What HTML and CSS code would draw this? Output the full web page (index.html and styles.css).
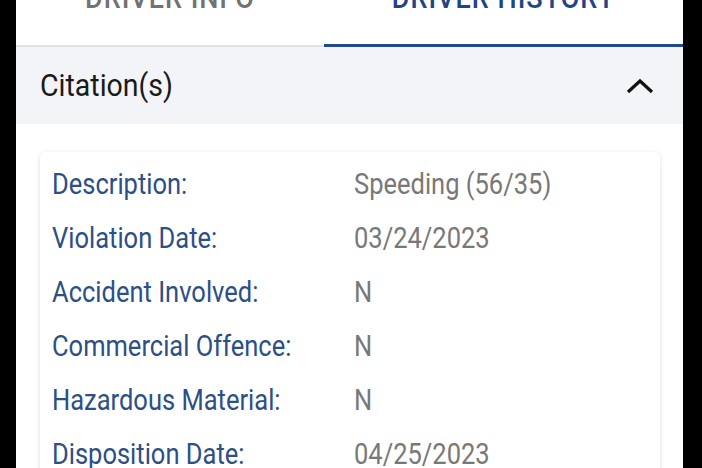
FILE: index.html
```html
<!DOCTYPE html>
<html>
<head>
<meta charset="utf-8">
<link rel="stylesheet" href="styles.css">
</head>
<body>
<div class="screen">
  <div class="tabs">
    <div class="tab tab-info"><span class="tab-text">DRIVER INFO</span></div>
    <div class="tab tab-history active"><span class="tab-text">DRIVER HISTORY</span></div>
  </div>
  <div class="section-header">
    <span class="section-title">Citation(s)</span>
    <svg class="chevron" width="30" height="18" viewBox="0 0 30 18">
      <path d="M3 15 L15 4 L27 15" fill="none" stroke="#111" stroke-width="3.2"/>
    </svg>
  </div>
  <div class="content">
    <div class="card">
      <div class="row"><span class="label">Description:</span><span class="value">Speeding (56/35)</span></div>
      <div class="row"><span class="label">Violation Date:</span><span class="value">03/24/2023</span></div>
      <div class="row"><span class="label">Accident Involved:</span><span class="value">N</span></div>
      <div class="row"><span class="label">Commercial Offence:</span><span class="value">N</span></div>
      <div class="row"><span class="label">Hazardous Material:</span><span class="value">N</span></div>
      <div class="row"><span class="label">Disposition Date:</span><span class="value">04/25/2023</span></div>
    </div>
  </div>
</div>
</body>
</html>
```

FILE: styles.css
```css
html, body {
  margin: 0;
  padding: 0;
  background: #000;
  height: 100%;
  overflow: hidden;
}
.screen {
  margin-left: 16px;
  width: 667px;
  height: 100%;
  background: #fff;
  font-family: Roboto, "Liberation Sans", sans-serif;
  overflow: hidden;
}
.tabs {
  display: flex;
  height: 63px;
  margin-top: -18px;
  background: #fff;
  border-bottom: 2px solid #e2e3e6;
}
.tab {
  display: flex;
  align-items: flex-start;
  justify-content: center;
  font-size: 27px;
  font-weight: 500;
  letter-spacing: 1px;
  color: #727272;
  line-height: 32px;
  box-sizing: border-box;
}
.tab-text {
  display: inline-block;
  transform: scaleY(1.12);
}
.tab-info {
  width: 308px;
}
.tab-history {
  flex: 1;
}
.tab.active {
  color: #1f4585;
  border-bottom: 3px solid #22498c;
  margin-bottom: -2px;
}
.section-header {
  height: 77px;
  background: #f3f4f8;
  display: flex;
  align-items: center;
  justify-content: space-between;
  padding: 0 28px 0 24px;
}
.section-title {
  display: inline-block;
  font-size: 28.5px;
  color: #1a1a1a;
  transform: scaleY(1.1);
}
.chevron {
  display: block;
}
.content {
  padding: 28px 23px 0 24px;
}
.card {
  background: #fff;
  border-radius: 6px;
  box-shadow: 0 1px 5px rgba(0, 0, 0, 0.13);
  padding: 5px 12px 20px 12px;
}
.row {
  display: grid;
  grid-template-columns: 302px 1fr;
  height: 54px;
  align-items: center;
  font-size: 25.5px;
}
.label, .value {
  display: inline-block;
  justify-self: start;
  transform: scaleY(1.12);
}
.label {
  color: #2b4f86;
}
.value {
  color: #787878;
}
```
